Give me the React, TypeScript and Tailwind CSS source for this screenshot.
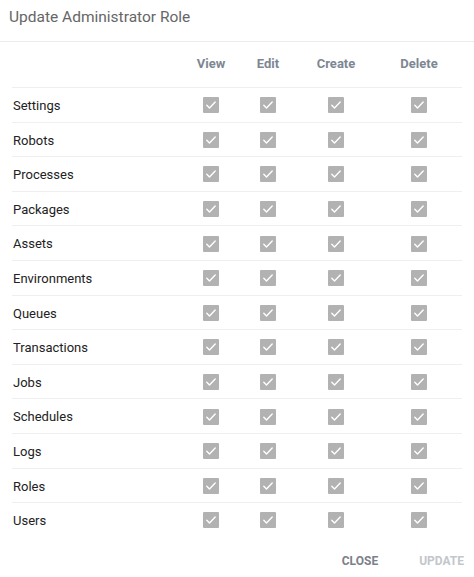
const resources = [
  "Settings",
  "Robots",
  "Processes",
  "Packages",
  "Assets",
  "Environments",
  "Queues",
  "Transactions",
  "Jobs",
  "Schedules",
  "Logs",
  "Roles",
  "Users",
];

const columns = ["View", "Edit", "Create", "Delete"];

function CheckedBox() {
  return (
    <span className="flex h-4 w-4 items-center justify-center rounded-[1px] bg-[#b2b2b2]">
      <svg viewBox="0 0 16 16" className="h-4 w-4" fill="none">
        <path d="M3.8 8.3l2.7 2.6 5.7-5.8" stroke="#fff" strokeWidth="1.4" strokeLinecap="round" strokeLinejoin="round" />
      </svg>
    </span>
  );
}

export default function App() {
  return (
    <div className="h-[577px] w-[474px] bg-white font-['Roboto',sans-serif]">
      {/* Header */}
      <div className="flex h-[42px] items-center border-b border-[#ececec] pl-[9px] pb-[5px]">
        <h2 className="text-[15.5px] text-[#666666]">Update Administrator Role</h2>
      </div>

      {/* Table */}
      <div className="px-3">
        <div className="grid h-[45px] grid-cols-[170px_58px_56px_80px_86px] items-center pb-[2px]">
          <span />
          {columns.map((c) => (
            <span key={c} className="text-center text-[13px] font-bold text-[#7d8793]">
              {c}
            </span>
          ))}
        </div>
        {resources.map((r) => (
          <div
            key={r}
            className="grid h-[34.6px] grid-cols-[170px_58px_56px_80px_86px] items-center border-t border-[#efefef]"
          >
            <span className="pl-[1px] pt-[2px] text-[13px] text-[#222222]">{r}</span>
            {columns.map((c) => (
              <span key={c} className="flex justify-center pt-[1px]">
                <CheckedBox />
              </span>
            ))}
          </div>
        ))}
      </div>

      {/* Footer */}
      <div className="mt-[15px] flex justify-end gap-[41px] pr-[10px]">
        <button className="text-[12px] font-bold uppercase text-[#7b8089]">Close</button>
        <button className="text-[12px] font-bold uppercase text-[#c3c6ca]">Update</button>
      </div>
    </div>
  );
}
